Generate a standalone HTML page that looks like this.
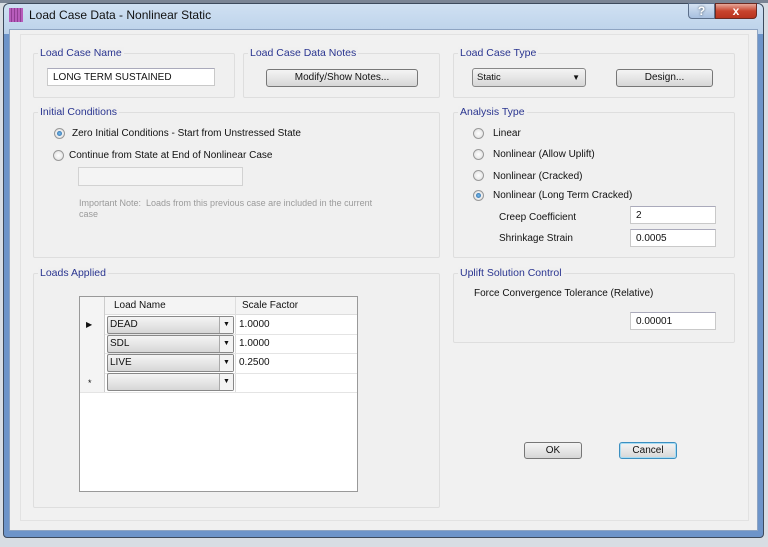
<!DOCTYPE html>
<html><head><style>
*{box-sizing:border-box;margin:0;padding:0}
body{width:768px;height:547px;overflow:hidden;background:#d8dde3;font-family:"Liberation Sans",sans-serif;font-size:10px;color:#111;position:relative}
.a{position:absolute}
.win{left:3px;top:3px;width:761px;height:535px;border:1px solid #3d4a5c;border-radius:6px 6px 4px 4px;background:linear-gradient(#cfe0f2,#bcd2ea 30px,#6d94c9 30px,#6d94c9);}
.client{left:9px;top:29px;width:749px;height:502px;background:#f0f0f0;border:1px solid #8ea4c2}
.panel{left:20px;top:34px;width:729px;height:487px;border:1px solid #e2e2e2;background:#f1f1f1}
.grp{position:absolute;border:1px solid #dedede;border-radius:2px;background:#f0f0f0}
.gt{position:absolute;color:#2a3590;font-size:10.5px;background:#f0f0f0;padding:0 2px;white-space:nowrap}
.tb{position:absolute;background:#fff;border:1px solid #c9c9c9;border-top-color:#aab;font-size:10px;padding:1px 5px 0;line-height:16px;white-space:nowrap}
.btn{position:absolute;border:1px solid #777;border-radius:3px;background:linear-gradient(#f4f4f4,#e6e6e6 50%,#d6d6d6);text-align:center;font-size:10px;white-space:nowrap}
.rad{position:absolute;width:11px;height:11px;border-radius:50%;border:1px solid #999;background:radial-gradient(#fff,#dcdcdc)}
.rad.on::after{content:"";position:absolute;left:2px;top:2px;width:5px;height:5px;border-radius:50%;background:radial-gradient(#7cc0ef,#1f5c9c)}
.lb{position:absolute;white-space:nowrap}
</style></head><body>
<div class="a" style="left:0;top:0;width:768px;height:3px;background:#7a8494"></div>
<div class="a win"></div>
<div class="a" style="left:9px;top:8px;width:14px;height:14px;background:repeating-linear-gradient(90deg,#b64fb6 0 2px,#8a2d8a 2px 3px),#a0a;opacity:.9"></div>
<div class="lb" style="left:29px;top:8px;font-size:12px;color:#111">Load Case Data - Nonlinear Static</div>
<div class="a" style="left:688px;top:3px;width:27px;height:16px;border:1px solid #5c6f8a;border-radius:0 0 0 4px;background:linear-gradient(#d5e2f2,#a7bfdf);color:#fff;font-weight:bold;text-align:center;font-size:12px;line-height:14px;text-shadow:0 0 2px #345">?</div>
<div class="a" style="left:715px;top:3px;width:42px;height:16px;border:1px solid #6b2a22;border-radius:0 0 4px 0;background:linear-gradient(#e6a89a,#c8442e 50%,#b83420);color:#fff;font-weight:bold;text-align:center;font-size:12px;line-height:14px">x</div>
<div class="a client"></div>
<div class="a panel"></div>

<div class="grp" style="left:33px;top:53px;width:202px;height:45px"></div>
<div class="gt" style="left:38px;top:47px">Load Case Name</div>
<div class="tb" style="left:47px;top:68px;width:168px;height:18px">LONG TERM SUSTAINED</div>

<div class="grp" style="left:243px;top:53px;width:197px;height:45px"></div>
<div class="gt" style="left:248px;top:47px">Load Case Data Notes</div>
<div class="btn" style="left:266px;top:69px;width:152px;height:18px;line-height:16px">Modify/Show Notes...</div>

<div class="grp" style="left:453px;top:53px;width:282px;height:45px"></div>
<div class="gt" style="left:458px;top:47px">Load Case Type</div>
<div class="btn" style="left:472px;top:68px;width:114px;height:19px;line-height:17px;text-align:left;padding-left:4px;font-size:9.5px;border-color:#888">Static<span style="position:absolute;right:5px;top:0;font-size:8px">▼</span></div>
<div class="btn" style="left:616px;top:69px;width:97px;height:18px;line-height:16px">Design...</div>

<div class="grp" style="left:33px;top:112px;width:407px;height:146px"></div>
<div class="gt" style="left:38px;top:106px">Initial Conditions</div>
<div class="rad on" style="left:54px;top:128px"></div>
<div class="lb" style="left:72px;top:128px">Zero Initial Conditions - Start from Unstressed State</div>
<div class="rad" style="left:53px;top:150px"></div>
<div class="lb" style="left:69px;top:150px">Continue from State at End of Nonlinear Case</div>
<div class="a" style="left:78px;top:167px;width:165px;height:19px;border:1px solid #d2d2d2;background:#f4f4f4"></div>
<div class="lb" style="left:79px;top:198px;color:#9a9a9a;font-size:9px;line-height:11px;white-space:normal;width:305px">Important Note:&nbsp; Loads from this previous case are included in the current case</div>

<div class="grp" style="left:453px;top:112px;width:282px;height:146px"></div>
<div class="gt" style="left:458px;top:106px">Analysis Type</div>
<div class="rad" style="left:473px;top:128px"></div><div class="lb" style="left:493px;top:128px">Linear</div>
<div class="rad" style="left:473px;top:149px"></div><div class="lb" style="left:493px;top:149px">Nonlinear (Allow Uplift)</div>
<div class="rad" style="left:473px;top:170px"></div><div class="lb" style="left:493px;top:171px">Nonlinear (Cracked)</div>
<div class="rad on" style="left:473px;top:190px"></div><div class="lb" style="left:493px;top:190px">Nonlinear (Long Term Cracked)</div>
<div class="lb" style="left:499px;top:212px">Creep Coefficient</div>
<div class="tb" style="left:630px;top:206px;width:86px;height:18px">2</div>
<div class="lb" style="left:499px;top:233px">Shrinkage Strain</div>
<div class="tb" style="left:630px;top:229px;width:86px;height:18px">0.0005</div>

<div class="grp" style="left:33px;top:273px;width:407px;height:235px"></div>
<div class="gt" style="left:38px;top:267px">Loads Applied</div>
<div class="a" style="left:79px;top:296px;width:279px;height:196px;background:#fff;border:1px solid #999"></div>
<div class="a" style="left:80px;top:297px;width:277px;height:18px;background:#f4f4f4;border-bottom:1px solid #ddd"></div>
<div class="a" style="left:80px;top:297px;width:25px;height:96px;background:#f4f4f4;border-right:1px solid #ccc"></div>
<div class="lb" style="left:114px;top:300px">Load Name</div>
<div class="lb" style="left:242px;top:300px">Scale Factor</div>
<div class="a" style="left:235px;top:297px;width:1px;height:96px;background:#ddd"></div>
<div class="a" style="left:105px;top:334px;width:252px;height:1px;background:#e4e4e4"></div>
<div class="a" style="left:105px;top:353px;width:252px;height:1px;background:#e4e4e4"></div>
<div class="a" style="left:105px;top:373px;width:252px;height:1px;background:#e4e4e4"></div>
<div class="a" style="left:80px;top:392px;width:277px;height:1px;background:#e4e4e4"></div>
<div class="lb" style="left:86px;top:320px;font-size:8px">▶</div>
<div class="lb" style="left:88px;top:378px;font-size:9px">*</div>
<div class="btn" style="left:107px;top:316px;width:127px;height:18px;line-height:16px;text-align:left;padding-left:2px;border-color:#888;border-radius:2px">DEAD<span style="position:absolute;right:0;top:0;width:14px;height:16px;border-left:1px solid #aaa;background:#f3f3f3;font-size:7px;text-align:center">▼</span></div>
<div class="btn" style="left:107px;top:335px;width:127px;height:18px;line-height:16px;text-align:left;padding-left:2px;border-color:#888;border-radius:2px">SDL<span style="position:absolute;right:0;top:0;width:14px;height:16px;border-left:1px solid #aaa;background:#f3f3f3;font-size:7px;text-align:center">▼</span></div>
<div class="btn" style="left:107px;top:354px;width:127px;height:18px;line-height:16px;text-align:left;padding-left:2px;border-color:#888;border-radius:2px">LIVE<span style="position:absolute;right:0;top:0;width:14px;height:16px;border-left:1px solid #aaa;background:#f3f3f3;font-size:7px;text-align:center">▼</span></div>
<div class="btn" style="left:107px;top:373px;width:127px;height:18px;line-height:16px;border-color:#888;border-radius:2px"><span style="position:absolute;right:0;top:0;width:14px;height:16px;border-left:1px solid #aaa;background:#f3f3f3;font-size:7px;text-align:center">▼</span></div>
<div class="lb" style="left:239px;top:319px">1.0000</div>
<div class="lb" style="left:239px;top:338px">1.0000</div>
<div class="lb" style="left:239px;top:357px">0.2500</div>

<div class="grp" style="left:453px;top:273px;width:282px;height:70px"></div>
<div class="gt" style="left:458px;top:267px">Uplift Solution Control</div>
<div class="lb" style="left:474px;top:288px">Force Convergence Tolerance (Relative)</div>
<div class="tb" style="left:630px;top:312px;width:86px;height:18px">0.00001</div>

<div class="btn" style="left:524px;top:442px;width:58px;height:17px;line-height:15px">OK</div>
<div class="btn" style="left:619px;top:442px;width:58px;height:17px;line-height:15px;border-color:#3c8fc0;box-shadow:0 0 0 1px #a8dcf3 inset">Cancel</div>
</body></html>
